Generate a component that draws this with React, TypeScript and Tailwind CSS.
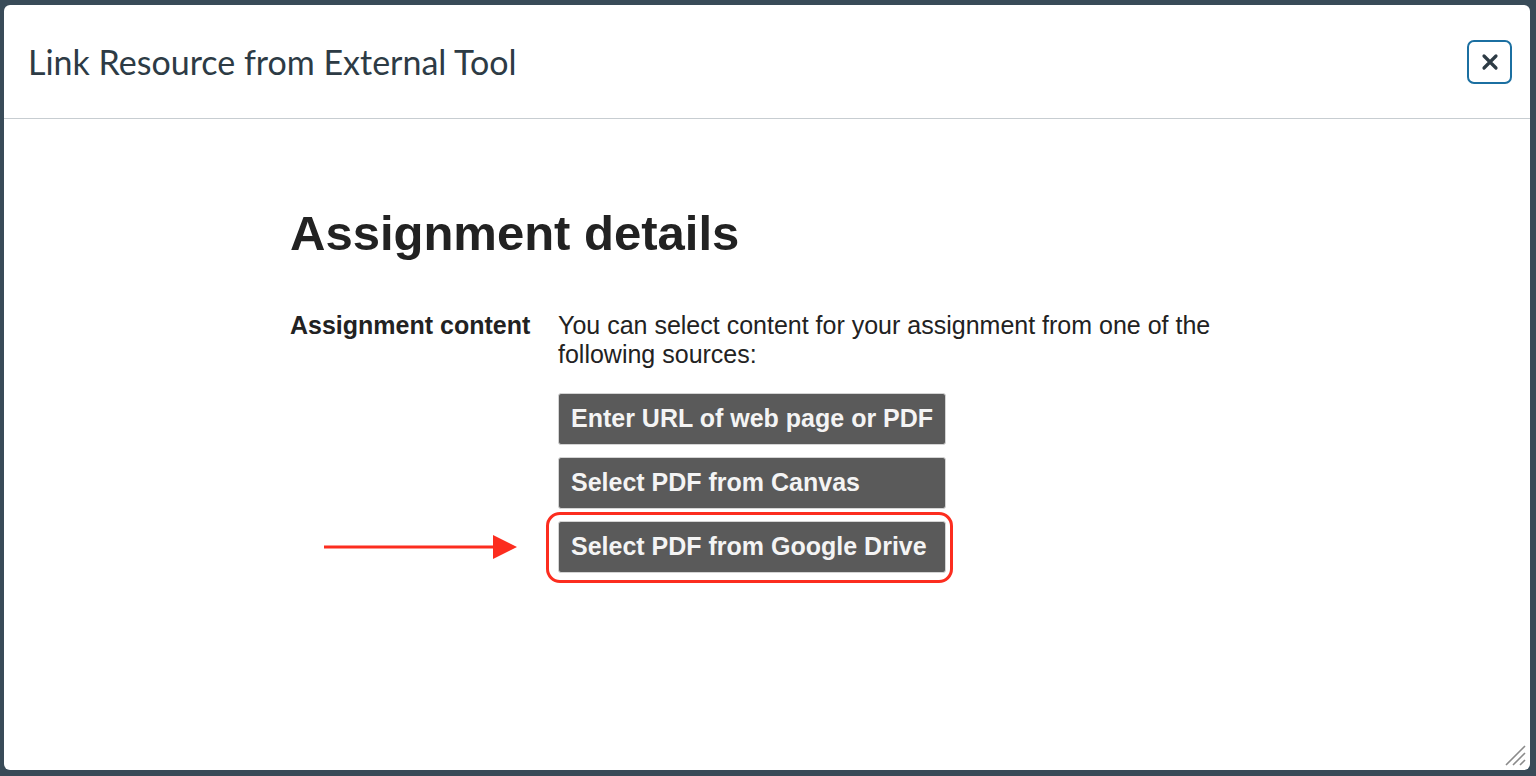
import React from "react";

function CloseIcon() {
  return (
    <svg width="18" height="18" viewBox="0 0 18 18" aria-hidden>
      <path d="M3 3 L15 15 M15 3 L3 15" stroke="#2d3b45" strokeWidth="3.2" strokeLinecap="round" />
    </svg>
  );
}

function ResizeGrip() {
  return (
    <svg width="24" height="24" viewBox="0 0 24 24" className="absolute bottom-[3px] right-[3px]" aria-hidden>
      <path d="M3 22 L22 3 M10 22 L22 10 M17 22 L22 17" stroke="#8b8b8b" strokeWidth="1.6" />
    </svg>
  );
}

const sources = [
  "Enter URL of web page or PDF",
  "Select PDF from Canvas",
  "Select PDF from Google Drive",
];

export default function App() {
  return (
    <div className="h-[776px] w-[1536px] bg-[#394b58] pl-[4px] pr-[6px] pt-[5px] pb-[6px] font-['Liberation_Sans',Arial,sans-serif]">
      <div className="relative flex h-full flex-col rounded-[6px] bg-white">
        {/* Header */}
        <div className="flex h-[114px] items-center justify-between border-b border-[#c7cdd1] pl-6 pr-[18px]">
          <h2 className="font-['Lato',sans-serif] text-[34px] font-normal text-[#2d3b45]">
            Link Resource from External Tool
          </h2>
          <button className="flex h-[44px] w-[45px] items-center justify-center rounded-[7px] border-2 border-[#1b6fa1] bg-white">
            <CloseIcon />
          </button>
        </div>

        {/* Body */}
        <div className="pl-[286px] pt-[86px]">
          <h1 className="text-[49px] font-bold leading-[57px] text-[#222]">Assignment details</h1>

          <div className="mt-[49px] flex">
            <div className="w-[268px] text-[25px] font-bold leading-[29px] text-[#222]">Assignment content</div>
            <div>
              <p className="max-w-[700px] text-[25px] leading-[29px] text-[#222]">
                You can select content for your assignment from one of the following sources:
              </p>
              <div className="mt-[24px] flex flex-col items-start gap-[12px]">
                {sources.map((label, i) => (
                  <div key={label} className="relative">
                    <button className="h-[52px] w-[388px] rounded-[3px] border border-[#d4d4d4] bg-[#5a5a5a] pl-[12px] text-left text-[25px] font-bold text-[#f4f4f4]">
                      {label}
                    </button>
                    {i === 2 && (
                      <>
                        <div className="pointer-events-none absolute -bottom-[10px] -left-[12px] -right-[7px] -top-[9px] rounded-[14px] border-[3px] border-[#fc2d1f]" />
                        <svg
                          width="196"
                          height="26"
                          viewBox="0 0 196 26"
                          className="absolute -left-[235px] top-[13px]"
                          aria-hidden
                        >
                          <line x1="1" y1="13" x2="174" y2="13" stroke="#fc2d1f" strokeWidth="3" />
                          <polygon points="170,1 194,13 170,25" fill="#fc2d1f" />
                        </svg>
                      </>
                    )}
                  </div>
                ))}
              </div>
            </div>
          </div>
        </div>

        <ResizeGrip />
      </div>
    </div>
  );
}
